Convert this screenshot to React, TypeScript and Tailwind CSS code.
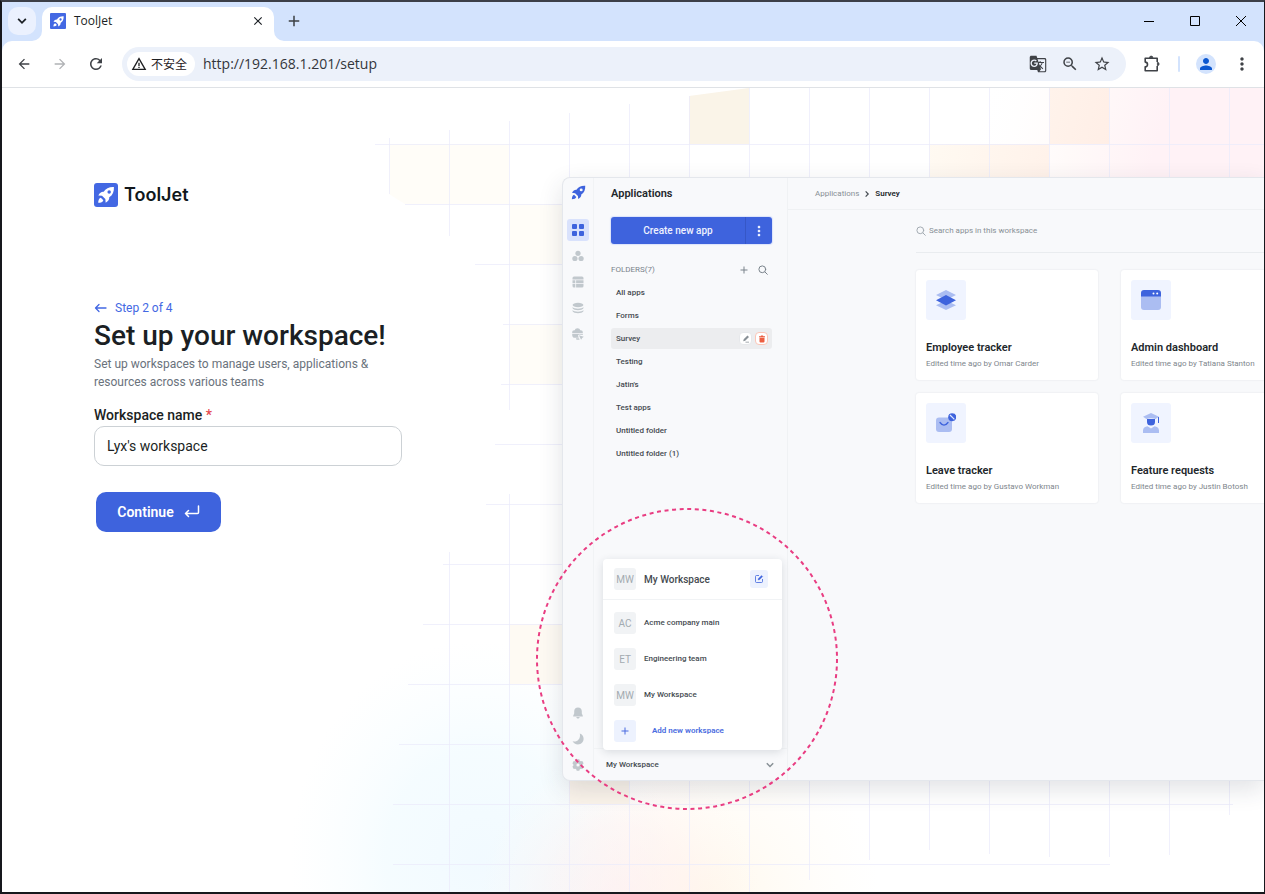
import type { ReactNode } from "react";
import {
  MdAdd,
  MdArrowBack,
  MdArrowForward,
  MdClose,
  MdGTranslate,
  MdMoreVert,
  MdPerson,
  MdRefresh,
  MdStarOutline,
  MdWarningAmber,
  MdZoomOut,
} from "react-icons/md";

const FOLDERS = [
  "All apps",
  "Forms",
  "Survey",
  "Testing",
  "Jatin's",
  "Test apps",
  "Untitled folder",
  "Untitled folder (1)",
];

const WORKSPACES = [
  { initials: "AC", name: "Acme company main" },
  { initials: "ET", name: "Engineering team" },
  { initials: "MW", name: "My Workspace" },
];

const APPS = [
  { title: "Employee tracker", author: "Omar Carder", icon: <LayersIcon /> },
  { title: "Admin dashboard", author: "Tatiana Stanton", icon: <WindowIcon /> },
  { title: "Leave tracker", author: "Gustavo Workman", icon: <LeaveIcon /> },
  { title: "Feature requests", author: "Justin Botosh", icon: <GraduateIcon /> },
];

// [x, top, bottom]
const GRID_COLUMNS = [
  [389, 138, 194],
  [449, 130, 236],
  [449, 552, 892],
  [509, 121, 410],
  [509, 494, 892],
  [569, 113, 892],
  [629, 104, 892],
  [689, 96, 892],
  [749, 88, 892],
  [809, 88, 880],
  [869, 88, 860],
  [929, 88, 850],
  [989, 88, 854],
  [1049, 88, 857],
  [1109, 88, 857],
  [1169, 88, 855],
  [1229, 88, 815],
];

// [y, left, right]
const GRID_ROWS = [
  [144, 375, 1264],
  [204, 405, 700],
  [264, 475, 700],
  [324, 503, 700],
  [384, 501, 700],
  [444, 495, 700],
  [504, 486, 700],
  [564, 443, 700],
  [624, 423, 700],
  [684, 408, 700],
  [744, 399, 700],
  [804, 393, 1233],
  [864, 393, 1110],
];

export default function App() {
  return (
    <div className="flex min-h-screen flex-col border-x-2 border-y-2 border-r border-[#17181d] border-t-[#3c3f48] bg-white font-['Roboto','Noto_Sans_CJK_SC',sans-serif] text-[#1b1f24]">
      <TabStrip />
      <Toolbar />
      <main className="relative flex flex-1 overflow-hidden">
        <Backdrop />
        <SetupForm />
        <Preview />
      </main>
    </div>
  );
}

function TabStrip() {
  return (
    <header className="flex h-[39px] items-end bg-[#d3e3fd] pl-1.5 font-['Open_Sans','Noto_Sans',sans-serif] text-xs">
      <button
        type="button"
        aria-label="Search tabs"
        className="mb-1.5 grid size-7 place-items-center rounded-[10px] bg-[#ebf1fe]"
      >
        <ChevronIcon className="size-3" />
      </button>
      <div className="relative ml-1.5 flex h-[34px] w-[232px] items-center rounded-t-[10px] bg-white pr-2 pb-1.5 pl-2">
        <TabCorner className="absolute bottom-0 -left-2.5 size-2.5" />
        <TabCorner className="absolute -right-2.5 bottom-0 size-2.5 -scale-x-100" />
        <span className="grid size-4 place-items-center rounded-[1px] bg-[#4368e3] text-white">
          <RocketIcon className="size-[13px]" />
        </span>
        <span className="ml-2 flex-1">ToolJet</span>
        <button type="button" aria-label="Close tab" className="grid size-4 place-items-center">
          <MdClose className="size-3.5" />
        </button>
      </div>
      <button
        type="button"
        aria-label="New tab"
        className="mb-1.5 ml-1.5 grid size-7 place-items-center text-[#3c4043]"
      >
        <MdAdd className="size-[18px]" />
      </button>
      <div className="ml-auto flex h-full items-stretch pb-px text-black">
        <WindowButton label="Minimize">
          <path d="M0 5.5h10" />
        </WindowButton>
        <WindowButton label="Maximize">
          <path d="M.5.5h9v9h-9z" />
        </WindowButton>
        <WindowButton label="Close window">
          <path d="M0 0l10 10M10 0L0 10" />
        </WindowButton>
      </div>
    </header>
  );
}

function WindowButton({ label, children }: { label: string; children: ReactNode }) {
  return (
    <button type="button" aria-label={label} className="grid w-[46px] place-items-center">
      <svg viewBox="0 0 10 10" className="size-2.5 overflow-visible fill-none stroke-current">
        {children}
      </svg>
    </button>
  );
}

function TabCorner({ className }: { className: string }) {
  return (
    <svg viewBox="0 0 10 10" className={className}>
      <path d="M10 0v10H0A10 10 0 0 0 10 0z" fill="#fff" />
    </svg>
  );
}

function Toolbar() {
  return (
    <div className="bg-[#d3e3fd]">
      <nav className="flex h-[47px] items-center gap-1 rounded-t-[10px] border-b border-[#dfe2e6] bg-white px-1.5 text-[#3f4247]">
        <ToolbarButton label="Back">
          <MdArrowBack className="size-4" />
        </ToolbarButton>
        <ToolbarButton label="Forward">
          <MdArrowForward className="size-4 text-[#b0b2b5]" />
        </ToolbarButton>
        <ToolbarButton label="Reload">
          <MdRefresh className="size-[18px]" />
        </ToolbarButton>
        <div className="ml-1.5 flex h-[34px] flex-1 items-center rounded-full bg-[#ecf1fa] pr-2 pl-[5px]">
          <button
            type="button"
            className="flex h-6 items-center gap-1 rounded-full bg-white pr-2 pl-1 font-['Noto_Sans_CJK_SC',sans-serif] text-xs text-[#1f2023]"
          >
            <MdWarningAmber className="size-4" />
            不安全
          </button>
          <input
            aria-label="Address"
            defaultValue="http://192.168.1.201/setup"
            className="ml-2 min-w-0 flex-1 bg-transparent font-['Open_Sans','Noto_Sans',sans-serif] text-sm text-[#33363b] outline-none"
          />
          <ToolbarButton label="Translate">
            <MdGTranslate className="size-[18px]" />
          </ToolbarButton>
          <ToolbarButton label="Zoom">
            <MdZoomOut className="size-[18px]" />
          </ToolbarButton>
          <ToolbarButton label="Bookmark">
            <MdStarOutline className="size-[18px]" />
          </ToolbarButton>
        </div>
        <div className="ml-1.5 flex items-center">
          <ToolbarButton label="Extensions">
            <ExtensionIcon />
          </ToolbarButton>
        </div>
        <span className="mx-1.5 h-4 w-0.5 rounded-full bg-[#d3e3fd]" />
        <ToolbarButton label="Profile">
          <span className="grid size-5 place-items-center rounded-full bg-[#d3e3fd] text-[#0b57d0]">
            <MdPerson className="size-[18px]" />
          </span>
        </ToolbarButton>
        <ToolbarButton label="Menu">
          <MdMoreVert className="size-5" />
        </ToolbarButton>
      </nav>
    </div>
  );
}

function ToolbarButton({ label, children }: { label: string; children: ReactNode }) {
  return (
    <button type="button" aria-label={label} className="grid size-8 place-items-center">
      {children}
    </button>
  );
}

function Backdrop() {
  return (
    <svg
      viewBox="2 88 1262 804"
      preserveAspectRatio="xMinYMin slice"
      className="absolute inset-0 size-full"
      aria-hidden="true"
    >
      <defs>
        <radialGradient id="cyan">
          <stop offset="0" stopColor="#e4f5ff" stopOpacity=".5" />
          <stop offset=".5" stopColor="#e6f8ff" stopOpacity=".4" />
          <stop offset="1" stopColor="#f0fbff" stopOpacity="0" />
        </radialGradient>
        <radialGradient id="rose">
          <stop offset="0" stopColor="#ffe8ec" stopOpacity=".5" />
          <stop offset=".5" stopColor="#ffecec" stopOpacity=".35" />
          <stop offset="1" stopColor="#fff4ee" stopOpacity="0" />
        </radialGradient>
        <radialGradient id="cream">
          <stop offset="0" stopColor="#fff5e4" stopOpacity=".7" />
          <stop offset="1" stopColor="#fffaf0" stopOpacity="0" />
        </radialGradient>
        <linearGradient id="blush" gradientUnits="userSpaceOnUse" x1="970" y1="120" x2="1150" y2="170">
          <stop offset="0" stopColor="#fff" stopOpacity="0" />
          <stop offset=".55" stopColor="#fffaf9" />
          <stop offset="1" stopColor="#fff2f6" />
        </linearGradient>
        <linearGradient id="peach" gradientUnits="userSpaceOnUse" x1="929" y1="130" x2="1109" y2="170">
          <stop offset="0" stopColor="#fffaf2" />
          <stop offset="1" stopColor="#ffeee6" />
        </linearGradient>
      </defs>
      <ellipse cx="480" cy="860" rx="190" ry="220" fill="url(#cyan)" />
      <ellipse cx="710" cy="900" rx="170" ry="180" fill="url(#cream)" />
      <ellipse cx="620" cy="900" rx="140" ry="150" fill="url(#rose)" />
      <path d="M960 88h304v92H960z" fill="url(#blush)" />
      <g fill="#fffdf8">
        <path d="M389 144h120v60H405l-16-10z" />
        <path d="M509 204h60v60h-60zM509 324h60v60h-60z" />
      </g>
      <path d="M509 624h60v60h-60z" fill="#fefaf3" />
      <path d="M569 770h60v34h-60z" fill="#faf3ea" />
      <path d="M689 96l60-8v56h-60z" fill="#faf4e8" />
      <path d="M929 144h120v40H929zM1049 88h60v56h-60z" fill="url(#peach)" />
      <g stroke="#ebebfb" strokeOpacity=".75">
        {GRID_COLUMNS.map(([x, top, bottom]) => (
          <path key={`${x}-${top}`} d={`M${x + 0.5} ${top}V${bottom}`} />
        ))}
        {GRID_ROWS.map(([y, left, right]) => (
          <path key={y} d={`M${left} ${y + 0.5}H${right}`} />
        ))}
      </g>
    </svg>
  );
}

function SetupForm() {
  return (
    <section className="relative w-[560px] shrink-0 pt-[95px] pl-[92px]">
      <div className="flex h-6 items-center gap-1.5">
        <span className="grid size-6 place-items-center rounded-[3px] bg-[#4368e3] text-white">
          <RocketIcon className="size-5" />
        </span>
        <span className="font-['Inter',sans-serif] text-lg font-semibold text-[#11181c]">ToolJet</span>
      </div>
      <form className="mt-[92px] w-[308px]" onSubmit={(e) => e.preventDefault()}>
        <a href="#back" className="flex h-[18px] items-center gap-2 text-xs text-[#4368e3]">
          <svg viewBox="0 0 13 10" className="h-2.5 w-[13px] fill-none stroke-current" strokeWidth="1.3" strokeLinecap="round" strokeLinejoin="round">
            <path d="M12 5H1.5M5 1.5L1.5 5 5 8.5" />
          </svg>
          Step 2 of 4
        </a>
        <h1 className="text-[28px] leading-[38px] font-medium whitespace-nowrap">
          Set up your workspace!
        </h1>
        <p className="text-xs leading-[18px] text-[#6a727c]">
          Set up workspaces to manage users, applications &amp; resources across various teams
        </p>
        <label htmlFor="workspace" className="mt-3.5 block text-sm leading-5 font-medium">
          Workspace name <span className="text-[#e5484d]">*</span>
        </label>
        <input
          id="workspace"
          defaultValue="Lyx's workspace"
          className="mt-px h-10 w-full rounded-[10px] border border-[#ccd1d5] bg-white px-3 text-sm outline-none"
        />
        <button
          type="submit"
          className="mt-[26px] ml-0.5 flex h-10 w-[125px] items-center justify-center gap-2.5 rounded-[10px] bg-[#3e63dd] text-sm font-semibold text-white"
        >
          Continue
          <svg viewBox="0 0 16 14" className="h-3.5 w-4 fill-none stroke-current" strokeWidth="1.5" strokeLinecap="round" strokeLinejoin="round">
            <path d="M14.5 1v6.500a1 1 0 0 1-1 1H1.500M4.500 5.500l-3 3 3 3" />
          </svg>
        </button>
      </form>
    </section>
  );
}

function Preview() {
  return (
    <section className="relative min-w-0 flex-1 pt-[89px]">
      <div className="flex h-[604px] rounded-l-lg border border-r-0 border-[#e4e7ec] bg-[#f8f9fb] text-[8px] text-[#454b51] shadow-[0_8px_24px_rgba(40,50,70,0.14)]">
        <Rail />
        <Sidebar />
        <Dashboard />
      </div>
      <svg
        viewBox="0 0 302 302"
        className="pointer-events-none absolute top-[420px] -left-[26px] size-[302px] fill-none"
        aria-hidden="true"
      >
        <circle cx="151" cy="151" r="150" stroke="#e93d82" strokeWidth="2" strokeDasharray="4 3.600" />
      </svg>
    </section>
  );
}

function Rail() {
  return (
    <div className="flex w-[31px] flex-col items-center border-r border-[#f1f3f5] pt-1.5 pb-0.5 text-[#c1c8cd]">
      <RocketIcon className="size-[17px] text-[#3e63dd]" />
      <span className="my-[18px] grid size-[22px] shrink-0 place-items-center rounded-[3px] bg-[#d9e2fc]">
        <svg viewBox="0 0 12 12" className="size-3" fill="#3e63dd">
          <rect width="5" height="5" rx="1" />
          <rect x="7" width="5" height="5" rx="1" />
          <rect y="7" width="5" height="5" rx="1" />
          <rect x="7" y="7" width="5" height="5" rx="1" />
        </svg>
      </span>
      <div className="-mt-4 flex flex-col">
        <RailIcon>
          <circle cx="6" cy="3.300" r="2.600" />
          <circle cx="2.900" cy="8.500" r="2.600" />
          <circle cx="9.100" cy="8.500" r="2.600" />
        </RailIcon>
        <RailIcon>
          <path d="M2 .5h8a1.500 1.500 0 0 1 1.500 1.500v1.500H.5V2A1.500 1.500 0 0 1 2 .5zM.5 4.300h2.800v2.900H.5zM4.100 4.300h7.400v2.900H4.100zM.5 8h2.800v3.500H2A1.500 1.500 0 0 1 .5 10zM4.100 8h7.400v2a1.500 1.500 0 0 1-1.500 1.500H4.100z" />
        </RailIcon>
        <RailIcon>
          <ellipse cx="6" cy="3" rx="5.400" ry="2.200" />
          <path d="M.6 5c1 2.300 9.800 2.300 10.800 0v1.200c-1 2.600-9.800 2.600-10.800 0zM.6 8c1 2.300 9.800 2.300 10.800 0v1.200c-1 2.600-9.800 2.600-10.800 0z" />
        </RailIcon>
        <RailIcon>
          <path d="M2.800 2.200C3 .9 4 .2 5.500.2s2.500.7 2.700 2h.6c1.200 0 2 .8 2 2v1H.2v-1c0-1.200.8-2 2-2z" />
          <path d="M.2 6h10.600v1L7 6.600 6 7.400l.7 2.400H3C1.400 9.800.2 8.800.2 7.200z" />
          <path d="M6.900 7.300l4.900 1.500-1.600 1.100-1.100 1.900zM4 10.200h3l.6 1.500H5c-.6 0-1-.6-1-1.500z" />
        </RailIcon>
      </div>
      <div className="mt-auto flex flex-col">
        <RailIcon>
          <path d="M6 .5c-2.400 0-3.800 1.700-3.800 3.800v2.300L1.200 8.700v.7h9.600v-.7l-1-2.100V4.300C9.800 2.200 8.400.5 6 .5zM4.300 10h3.400c-.3 1-.9 1.500-1.700 1.500S4.600 11 4.300 10z" />
        </RailIcon>
        <RailIcon>
          <path d="M7.800.6C10.200 1.200 11.600 3.300 11.600 5.800c0 3.200-2.500 5.700-5.600 5.700-2.500 0-4.500-1.300-5.400-3.500 1 .5 2 .6 3 .4C6.800 7.800 8.700 4.600 7.800.6z" />
        </RailIcon>
        <RailIcon>
          <path
            fillRule="evenodd"
            d="M4.700.3h2.600l.5 1.500 1 .5 1.500-.3 1.300 2.200-1 1.200v1.200l1 1.200-1.300 2.200-1.500-.3-1 .5-.5 1.500H4.700l-.5-1.500-1-.5-1.500.3L.4 7.800l1-1.200V5.400l-1-1.200L1.700 2l1.500.3 1-.5zM6 4.400a1.600 1.600 0 1 0 0 3.200 1.600 1.600 0 0 0 0-3.200z"
          />
        </RailIcon>
      </div>
    </div>
  );
}

function RailIcon({ children }: { children: ReactNode }) {
  return (
    <span className="grid size-[26px] place-items-center">
      <svg viewBox="0 0 12 12" className="size-3 fill-current">
        {children}
      </svg>
    </span>
  );
}

function Sidebar() {
  return (
    <div className="relative flex w-[194px] flex-col border-r border-[#f0f2f4]">
      <div className="flex flex-1 flex-col pr-[15px] pl-[17px]">
        <h2 className="mt-[7px] text-[11px] leading-[18px] font-semibold text-[#22272b]">
          Applications
        </h2>
        <div className="mt-3.5 flex h-[27px] items-stretch rounded-[3px] bg-[#3e63dd] text-[#eef2ff] shadow-[0_0_1px_1px_#dbe3fb]">
          <button type="button" className="flex-1 border-r border-[#3657c6] text-[10px] font-medium">
            Create new app
          </button>
          <button type="button" aria-label="App options" className="grid w-[26px] place-items-center">
            <MdMoreVert className="size-4" />
          </button>
        </div>
        <div className="mt-4 flex h-5 items-center text-[#7a838b]">
          <span className="flex-1">FOLDERS(7)</span>
          <button type="button" aria-label="Add folder">
            <MdAdd className="size-3" />
          </button>
          <button type="button" aria-label="Search folders" className="mr-1 ml-2">
            <SearchIcon className="size-2.5" />
          </button>
        </div>
        <ul className="mt-px">
          {FOLDERS.map((folder) => (
            <li
              key={folder}
              className={
                folder === "Survey"
                  ? "my-px flex h-[21px] items-center rounded-[3px] bg-[#ecedef] pr-1 pl-[5px]"
                  : "flex h-[23px] items-center pr-1 pl-[5px]"
              }
            >
              <button type="button" className="flex-1 text-left font-medium">
                {folder}
              </button>
              {folder === "Survey" && <FolderActions />}
            </li>
          ))}
        </ul>
      </div>
      <button
        type="button"
        className="flex h-8 items-center justify-between border-t border-[#f1f3f5] px-3 font-medium"
      >
        My Workspace
        <ChevronIcon className="size-2.5 text-[#889096]" />
      </button>
      <WorkspaceMenu />
    </div>
  );
}

function FolderActions() {
  return (
    <div className="flex gap-[3px]">
      <button
        type="button"
        aria-label="Rename folder"
        className="grid size-[13px] place-items-center rounded-sm border border-[#e6e8eb] bg-white text-[#889096]"
      >
        <svg viewBox="0 0 8 8" className="size-2 fill-current">
          <path d="M5.500.6l1.500 1.500-3.800 3.700-2 .5.500-2zM3.500 6.700H7v.8H3.500z" />
        </svg>
      </button>
      <button
        type="button"
        aria-label="Delete folder"
        className="grid size-[13px] place-items-center rounded-sm border border-[#fbc6b8] bg-white text-[#ec5e41]"
      >
        <svg viewBox="0 0 8 8" className="size-2 fill-current">
          <path d="M3 .5h2l.4.8H7v1H1v-1h1.600zM1.500 2.800h5v3.700a1 1 0 0 1-1 1h-3a1 1 0 0 1-1-1z" />
        </svg>
      </button>
    </div>
  );
}

function WorkspaceMenu() {
  return (
    <div className="absolute right-[5px] bottom-[30px] left-[9px] rounded bg-white pb-px shadow-[0_2px_8px_rgba(30,40,60,0.14)]">
      <div className="mb-[5px] flex h-[41px] items-center gap-2 border-b border-[#f1f3f5] pr-3.5 pl-[11px]">
        <Avatar>MW</Avatar>
        <span className="flex-1 text-[10px] font-medium">My Workspace</span>
        <button
          type="button"
          aria-label="Edit workspace"
          className="grid size-[18px] place-items-center rounded-[3px] bg-[#edf2fe] text-[#3e63dd]"
        >
          <svg viewBox="0 0 10 10" className="size-2.5 fill-none stroke-current">
            <path d="M5 1.500H2.500a1 1 0 0 0-1 1v5a1 1 0 0 0 1 1h5a1 1 0 0 0 1-1V5" strokeWidth=".8" />
            <path d="M4 6l.4-1.600 3.200-3 1.100 1.100-3.200 3.200z" fill="currentColor" strokeWidth=".3" />
          </svg>
        </button>
      </div>
      {WORKSPACES.map(({ initials, name }) => (
        <button
          key={initials}
          type="button"
          className="flex h-9 w-full items-center gap-2 pl-[11px] text-left font-medium"
        >
          <Avatar>{initials}</Avatar>
          {name}
        </button>
      ))}
      <button
        type="button"
        className="flex h-9 w-full items-center gap-4 pl-[11px] text-left font-semibold text-[#4a6be0]"
      >
        <span className="grid size-[22px] place-items-center rounded-[3px] bg-[#edf2fe]">
          <MdAdd className="size-3" />
        </span>
        Add new workspace
      </button>
    </div>
  );
}

function Avatar({ children }: { children: ReactNode }) {
  return (
    <span className="grid size-[22px] place-items-center rounded-[3px] bg-[#f1f3f5] text-[10px] font-normal text-[#a3abb1]">
      {children}
    </span>
  );
}

function Dashboard() {
  return (
    <div className="min-w-0 flex-1 overflow-hidden">
      <div className="flex h-8 items-center gap-1 border-b border-[#eff1f3] pl-[27px]">
        <span className="text-[#889096]">Applications</span>
        <ChevronIcon className="size-2 -rotate-90" />
        <span className="font-semibold text-[#22272b]">Survey</span>
      </div>
      <div className="pl-[128px]">
        <label className="flex h-[43px] items-center gap-[3px] border-b border-[#e9ecef] text-[#a3abb2]">
          <SearchIcon className="size-2.5" />
          <input
            aria-label="Search apps"
            placeholder="Search apps in this workspace"
            className="flex-1 bg-transparent outline-none placeholder:text-[#889096]"
          />
        </label>
        <div className="mt-[17px] grid grid-cols-[182px_182px] gap-x-[23px] gap-y-[13px]">
          {APPS.map(({ title, author, icon }) => (
            <article
              key={title}
              className="h-[110px] rounded-[3px] bg-white p-2.5 shadow-[0_0_2px_rgba(40,50,70,0.12)]"
            >
              <div className="grid size-10 place-items-center rounded-[3px] bg-[#f0f4ff]">{icon}</div>
              <h3 className="mt-5 text-[11px] leading-4 font-semibold text-[#22272b]">{title}</h3>
              <p className="mt-px leading-[14px] whitespace-nowrap text-[#7e868c]">
                Edited time ago by {author}
              </p>
            </article>
          ))}
        </div>
      </div>
    </div>
  );
}

function LayersIcon() {
  return (
    <svg viewBox="0 0 20 20" className="size-5">
      <path d="M10 0l10 5-10 5L0 5zM10 10.500l10 4.800-10 4.700-10-4.700z" fill="#abbdf2" />
      <path d="M10 5l10 5.200-10 5.200-10-5.200z" fill="#3e63dd" />
    </svg>
  );
}

function WindowIcon() {
  return (
    <svg viewBox="0 0 20 20" className="size-5">
      <path d="M0 6h20v11a3 3 0 0 1-3 3H3a3 3 0 0 1-3-3z" fill="#abbdf2" />
      <path d="M3 0h14a3 3 0 0 1 3 3v3.500H0V3a3 3 0 0 1 3-3z" fill="#3e63dd" />
      <circle cx="12.500" cy="3.500" r="1" fill="#fff" />
      <circle cx="16.200" cy="3.500" r="1" fill="#fff" />
    </svg>
  );
}

function LeaveIcon() {
  return (
    <svg viewBox="0 0 20 20" className="size-5">
      <rect y="4.500" width="16" height="14.500" rx="3" fill="#abbdf2" />
      <path d="M4 9.500c2.500 3.500 5.500 3.500 8 0" fill="none" stroke="#3e63dd" strokeWidth="1.300" strokeLinecap="round" />
      <circle cx="16.200" cy="4.200" r="4" fill="#3e63dd" />
      <path d="M14 2l4.400 4.400" stroke="#dfe7fd" strokeWidth="1.200" />
    </svg>
  );
}

function GraduateIcon() {
  return (
    <svg viewBox="0 0 20 20" className="size-5">
      <path d="M6 6h8v3a4 3.500 0 0 1-8 0zM17 4h1v6h-1z" fill="#3e63dd" />
      <path d="M10 0l8 3.800L14.500 6C12 4.900 8 4.900 5.500 6L2 3.800zM2 20v-2.500c0-2.600 2-4 4.500-4.200L10 15.500l3.500-2.200c2.500.2 4.500 1.600 4.500 4.200V20z" fill="#abbdf2" />
    </svg>
  );
}

function RocketIcon({ className }: { className: string }) {
  return (
    <svg viewBox="0 0 24 24" className={`${className} fill-current`} fillRule="evenodd">
      <path d="M21.500 2.500c-5.500-.3-9.800 1.600-12.300 5.700-2.600-.3-4.700 1.200-6.400 4.300l4.400.4 4 4 .4 4.300c3.100-1.700 4.600-3.800 4.300-6.400 4.200-2.500 5.900-6.800 5.600-12.300zM15.800 6.200a2.100 2.100 0 1 1 0 4.200 2.100 2.100 0 0 1 0-4.200z" />
      <path d="M5.800 15.200c-2.200.6-3 2.800-3.200 6.200 3.400-.2 5.600-1 6.200-3.200z" />
    </svg>
  );
}

function SearchIcon({ className }: { className: string }) {
  return (
    <svg viewBox="0 0 10 10" className={`${className} fill-none stroke-current`} strokeLinecap="round">
      <circle cx="4.300" cy="4.300" r="3.400" />
      <path d="M7 7l2.300 2.300" />
    </svg>
  );
}

function ChevronIcon({ className }: { className: string }) {
  return (
    <svg viewBox="0 0 10 10" className={`${className} fill-none stroke-current`} strokeWidth="1.500">
      <path d="M1.800 3.300L5 6.500l3.200-3.200" />
    </svg>
  );
}

function ExtensionIcon() {
  return (
    <svg viewBox="0 0 18 18" className="size-[18px] fill-none stroke-current" strokeWidth="1.600" strokeLinejoin="round">
      <path d="M14.200 7V3.200h-12v3.900a2.300 2.300 0 0 1 0 4.600v4.100h12V11" />
      <path d="M6.500 2.800a1.700 1.700 0 0 1 3.400 0zM14.400 7.300a1.700 1.700 0 0 1 0 3.400z" fill="currentColor" strokeWidth=".8" />
    </svg>
  );
}
